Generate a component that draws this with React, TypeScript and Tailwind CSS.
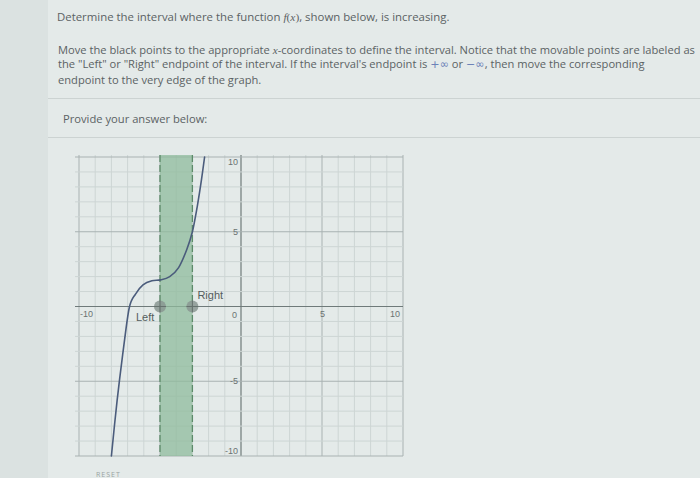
import React from "react";

// plot geometry (svg pixel coords)
const OX = 7;
const OY = 4;
const SX = 16.2;
const SY = 14.95;
const X = (u: number) => OX + (u + 10) * SX;
const Y = (v: number) => OY + (10 - v) * SY;

const curvePts: [number, number][] = [
  [-8, -10],
  [-7.65, -6.3],
  [-7.3, -3.2],
  [-6.9, -0.1],
  [-6.5, 0.85],
  [-6.05, 1.45],
  [-5.5, 1.72],
  [-4.96, 1.78],
  [-4.4, 2.0],
  [-3.85, 2.6],
  [-3.35, 3.8],
  [-3.0, 5.0],
  [-2.7, 6.7],
  [-2.45, 8.4],
  [-2.25, 10],
];

function smoothPath(pts: [number, number][]) {
  const p = pts.map(([u, v]) => [X(u), Y(v)]);
  let d = `M${p[0][0].toFixed(1)},${p[0][1].toFixed(1)}`;
  for (let i = 0; i < p.length - 1; i++) {
    const p0 = p[i - 1] || p[i];
    const p1 = p[i];
    const p2 = p[i + 1];
    const p3 = p[i + 2] || p2;
    const c1x = p1[0] + (p2[0] - p0[0]) / 6;
    const c1y = p1[1] + (p2[1] - p0[1]) / 6;
    const c2x = p2[0] - (p3[0] - p1[0]) / 6;
    const c2y = p2[1] - (p3[1] - p1[1]) / 6;
    d += ` C${c1x.toFixed(1)},${c1y.toFixed(1)} ${c2x.toFixed(1)},${c2y.toFixed(1)} ${p2[0].toFixed(1)},${p2[1].toFixed(1)}`;
  }
  return d;
}

const gridColor = (t: number) => (t === 0 ? "#6f7a7a" : t % 5 === 0 ? "#a9b2b2" : "#cdd5d4");

const Graph = () => {
  const ticks = Array.from({ length: 21 }, (_, i) => i - 10);
  return (
    <svg width={340} height={304} viewBox="0 0 340 304" className="block">
      {/* grid */}
      {ticks.map((t) => (
        <line key={"v" + t} x1={X(t)} x2={X(t)} y1={Y(10) - 2} y2={Y(-10)} stroke={gridColor(t)} strokeWidth={t === 0 ? 1.2 : 1} />
      ))}
      {ticks.map((t) => (
        <line key={"h" + t} x1={X(-10) - 4} x2={X(10)} y1={Y(t)} y2={Y(t)} stroke={gridColor(t)} strokeWidth={t === 0 ? 1.2 : 1} />
      ))}

      {/* shaded interval */}
      <rect x={X(-5)} y={Y(10) - 2} width={X(-3) - X(-5)} height={Y(-10) - Y(10) + 2} fill="#8fbb9c" opacity={0.75} />
      <line x1={X(-5)} x2={X(-5)} y1={Y(10) - 2} y2={Y(-10)} stroke="#5c8a69" strokeWidth={1.3} strokeDasharray="7 3" />
      <line x1={X(-3)} x2={X(-3)} y1={Y(10) - 2} y2={Y(-10)} stroke="#5c8a69" strokeWidth={1.3} strokeDasharray="7 3" />

      {/* curve */}
      <path d={smoothPath(curvePts)} fill="none" stroke="#4b5c7c" strokeWidth={1.6} strokeLinecap="round" />

      {/* axis labels */}
      <g fill="#6b7373" fontSize={9} className="font-['Liberation_Sans',Arial,sans-serif]">
        <text x={X(0) - 3} y={Y(10) + 8} textAnchor="end">10</text>
        <text x={X(0) - 3} y={Y(5) + 3} textAnchor="end">5</text>
        <text x={X(0) - 3} y={Y(-5) + 3} textAnchor="end">-5</text>
        <text x={X(0) - 3} y={Y(-10) - 2} textAnchor="end">-10</text>
        <text x={X(0) - 4} y={Y(0) + 11} textAnchor="end">0</text>
        <text x={X(-10) + 1} y={Y(0) + 10}>-10</text>
        <text x={X(5) - 2} y={Y(0) + 10}>5</text>
        <text x={X(10) - 3} y={Y(0) + 10} textAnchor="end">10</text>
      </g>

      {/* movable points */}
      {[-5, -3].map((u) => (
        <g key={u}>
          <circle cx={X(u)} cy={Y(0)} r={6} fill="#8a9792" opacity={0.85} />
          <line x1={X(u)} x2={X(u)} y1={Y(0) - 6} y2={Y(0) + 6} stroke="#66726e" strokeWidth={1} />
          <line x1={X(u) - 6} x2={X(u) + 6} y1={Y(0)} y2={Y(0)} stroke="#66726e" strokeWidth={1} />
        </g>
      ))}
      <g fill="#555d5d" fontSize={11} className="font-['Liberation_Sans',Arial,sans-serif]">
        <text x={X(-3) + 5} y={Y(0) - 8}>Right</text>
        <text x={X(-5) - 24} y={Y(0) + 14}>Left</text>
      </g>
    </svg>
  );
};

export default function App() {
  return (
    <div className="flex h-[478px] w-[700px] overflow-hidden bg-[#e4eae9] font-['Open_Sans','Noto_Sans',sans-serif] text-[#5b6264]">
      <div className="w-[48px] shrink-0 bg-[#dbe2e1]" />
      <div className="flex flex-1 flex-col">
        <div className="border-b border-[#ccd3d2] pb-[11px] pl-[9px] pt-[10px] leading-[14.5px]">
          <p className="text-[11.4px]">
            Determine the interval where the function <i className="font-['Liberation_Serif',serif]">f</i>
            <span className="font-['Liberation_Serif',serif]">(<i>x</i>)</span>, shown below, is increasing.
          </p>
          <p className="mt-[18px] pl-px text-[11.15px]">
            Move the black points to the appropriate <i className="font-['Liberation_Serif',serif]">x</i>-coordinates to define the interval. Notice that the movable points are labeled as the "Left" or "Right" endpoint of the interval. If the interval's endpoint is{" "}
            <span className="font-['DejaVu_Sans',sans-serif] text-[#6c82b8]">+∞</span> or{" "}
            <span className="font-['DejaVu_Sans',sans-serif] text-[#6c82b8]">−∞</span>, then move the corresponding
            <br />
            endpoint to the very edge of the graph.
          </p>
        </div>
        <div className="border-b border-[#ccd3d2] pb-[11px] pl-[15px] pt-[13px] text-[11.2px] leading-[14px]">
          Provide your answer below:
        </div>
        <div className="pl-[24px] pt-[15px]">
          <Graph />
          <div className="pl-[24px] pt-[13px] text-[7px] tracking-[1px] text-[#9aa2a2]">RESET</div>
        </div>
      </div>
    </div>
  );
}
